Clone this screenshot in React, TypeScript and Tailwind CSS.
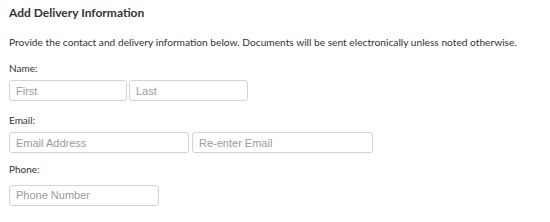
import React from 'react';

const inputCls =
  "h-[21px] rounded-[3px] border border-[#d3d3d3] bg-white px-[6px] text-[11px] text-[#333] placeholder:text-[#9a9a9a] outline-none font-['Liberation_Sans',Arial,sans-serif]";

const Label: React.FC<{ children: React.ReactNode }> = ({ children }) => (
  <div className="text-[10px] leading-[12px] text-[#333] mb-[6px]">{children}</div>
);

export default function App() {
  return (
    <div className="w-[550px] h-[222px] bg-white px-[9px] pt-[5px] font-['Lato','Noto_Sans',sans-serif] text-[#333]">
      <h2 className="text-[12px] leading-[16px] font-bold text-[#333]">Add Delivery Information</h2>
      <p className="mt-[15px] text-[10.2px] leading-[13px]">
        Provide the contact and delivery information below. Documents will be sent electronically unless noted otherwise.
      </p>

      <div className="mt-[13px]">
        <Label>Name:</Label>
        <div className="flex gap-[2px]">
          <input className={`${inputCls} w-[118px]`} placeholder="First" />
          <input className={`${inputCls} w-[119px]`} placeholder="Last" />
        </div>
      </div>

      <div className="mt-[13px]">
        <Label>Email:</Label>
        <div className="flex gap-[3px]">
          <input className={`${inputCls} w-[180px]`} placeholder="Email Address" />
          <input className={`${inputCls} w-[181px]`} placeholder="Re-enter Email" />
        </div>
      </div>

      <div className="mt-[10px]">
        <Label>Phone:</Label>
        <input className={`${inputCls} w-[150px]`} placeholder="Phone Number" />
      </div>
    </div>
  );
}
